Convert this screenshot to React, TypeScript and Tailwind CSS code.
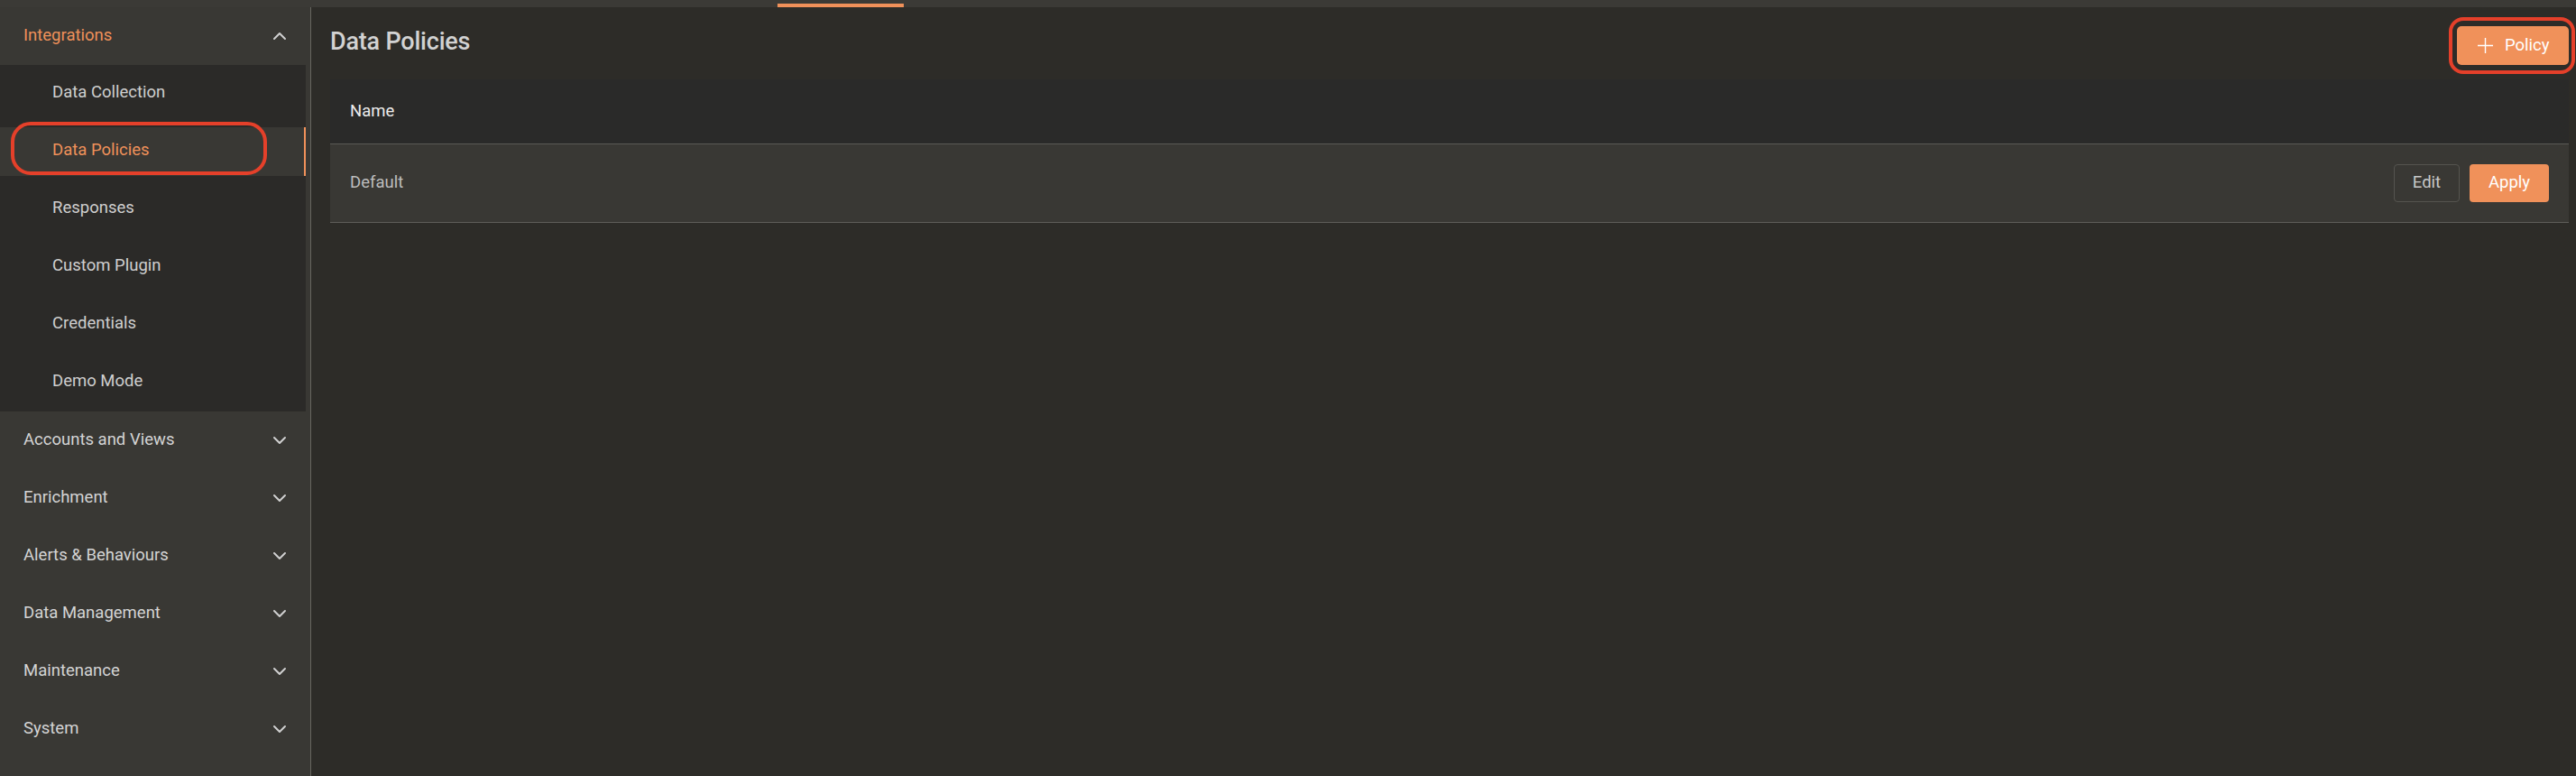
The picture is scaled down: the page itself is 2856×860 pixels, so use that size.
import React from 'react'
import { ChevronDown, ChevronUp } from 'lucide-react'
import clsx from 'clsx'

const subItems = ['Data Collection', 'Data Policies', 'Responses', 'Custom Plugin', 'Credentials', 'Demo Mode']
const groups = ['Accounts and Views', 'Enrichment', 'Alerts & Behaviours', 'Data Management', 'Maintenance', 'System']

const Sidebar = () => {
  return (
    <div className="w-[345px] shrink-0 bg-[#393834] border-r border-[#66655f]">
      <div className="w-[339px] flex flex-col">
        {/* open group ----------- */}
        <div className="h-[64px] flex items-center justify-between pl-[26px] pr-[17px]">
          <span className="text-[18.5px] text-[#f0915a]">Integrations</span>
          <ChevronUp size={24} strokeWidth={2} className="text-[#d0d0d0]" />
        </div>
        <div className="bg-[#2b2a28] flex flex-col">
          {subItems.map((item) => {
            const active = item === 'Data Policies'
            return (
              <div key={item} className="h-[64px] py-[5px] relative">
                <div
                  className={clsx(
                    'h-full flex items-center pl-[58px] pb-[2px] text-[18.5px]',
                    active ? 'bg-[#393834] border-r-2 border-[#f0915a] text-[#f0915a]' : 'text-[#cfcfcf]'
                  )}
                >
                  {item}
                </div>
                {active && (
                  <div className="absolute left-[12px] top-[-1px] w-[284px] h-[59px] rounded-[22px] border-[4px] border-[#e5402a]"></div>
                )}
              </div>
            )
          })}
        </div>
        {groups.map((g) => (
          <div key={g} className="h-[64px] flex items-center justify-between pl-[26px] pr-[17px]">
            <span className="text-[18.5px] text-[#d4d4d4]">{g}</span>
            <ChevronDown size={24} strokeWidth={2} className="text-[#d0d0d0]" />
          </div>
        ))}
      </div>
    </div>
  )
}

const App = () => {
  return (
    <div className="w-full h-[860px] flex flex-col bg-[#2d2c28] overflow-hidden" style={{ fontFamily: 'Roboto, "Liberation Sans", sans-serif' }}>
      {/* top strip with tab indicator */}
      <div className="h-[8px] shrink-0 bg-[#3b3a36] flex">
        <div className="ml-[862px] mt-[4px] w-[140px] h-[4px] bg-[#f0915a]"></div>
      </div>

      <div className="flex flex-1 min-h-0">
        <Sidebar />

        <div className="flex-1 pl-[21px] pr-[8px] flex flex-col">
          <div className="h-[80px] flex items-start justify-between">
            <h1 className="mt-[22px] leading-[32px] text-[27px] font-medium text-[#d2d2d2] tracking-[-0.2px]">Data Policies</h1>
            <div className="relative mt-[21px]">
              <button className="h-[43px] w-[124px] rounded-[5px] bg-[#f0915a] text-white text-[18.5px] flex items-center pl-[23px] gap-[13px]">
                <svg width="17" height="17" viewBox="0 0 17 17" fill="none" stroke="currentColor" strokeWidth="1.4">
                  <path d="M8.5 0v17M0 8.5h17" />
                </svg>
                <span>Policy</span>
              </button>
              <div className="absolute -left-[9px] -right-[7px] -top-[10px] -bottom-[10px] rounded-[16px] border-[4px] border-[#e5402a]"></div>
            </div>
          </div>

          <div className="flex flex-col">
            <div className="h-[72px] bg-[#2a2a29] border-b border-[#5a5955] flex items-center pl-[22px]">
              <span className="text-[18.5px] text-[#ececec]">Name</span>
            </div>
            <div className="h-[87px] bg-[#393834] border-b border-[#5f5e5a] flex items-center justify-between pl-[22px] pr-[22px]">
              <span className="text-[18.5px] text-[#bdbdbd]">Default</span>
              <div className="flex items-center gap-[11px]">
                <button className="h-[42px] w-[73px] rounded-[4px] border border-[#55544f] text-[18.5px] text-[#c8c8c8]">Edit</button>
                <button className="h-[42px] w-[88px] rounded-[4px] bg-[#f0915a] text-[18.5px] text-white">Apply</button>
              </div>
            </div>
          </div>
        </div>
      </div>
    </div>
  )
}

export default App
